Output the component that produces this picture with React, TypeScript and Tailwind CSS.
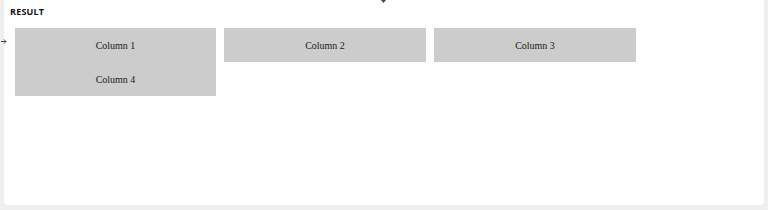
export default function App() {
  const cols = ["Column 1", "Column 2", "Column 3", "Column 4"];
  return (
    <div className="w-[768px] h-[210px] bg-[#efefef] relative overflow-hidden">
      {/* caret peeking in at the top */}
      <svg className="absolute left-[381px] top-0" width="5" height="3" viewBox="0 0 5 3">
        <path d="M0 0 L5 0 L2.5 3 Z" fill="#444" />
      </svg>
      <div className="mx-[4px] w-[760px] h-[205px] bg-white rounded-b-[4px] pt-[6px] pl-[6px] pr-[6px]">
        <div
          className="text-[9px] font-bold leading-[12px] tracking-[0.2px] text-[#111]"
          style={{ fontFamily: '"Open Sans", "Noto Sans", sans-serif' }}
        >
          RESULT
        </div>
        <div className="relative mt-[10px]">
          <svg className="absolute -left-[9px] top-[11px]" width="6" height="5" viewBox="0 0 6 5">
            <path d="M0 2.5 H5 M3 0.5 L5 2.5 L3 4.5" stroke="#333" strokeWidth="0.9" fill="none" />
          </svg>
          <div className="grid grid-cols-[201px_202px_202px] gap-x-[8px] pl-[5px]">
            {cols.map((c) => (
              <div
                key={c}
                className="h-[34px] bg-[#cccccc] flex items-center justify-center pt-[1px] text-[10px] text-[#1a1a1a]"
                style={{ fontFamily: '"Liberation Serif", "Times New Roman", serif' }}
              >
                {c}
              </div>
            ))}
          </div>
        </div>
      </div>
    </div>
  );
}
